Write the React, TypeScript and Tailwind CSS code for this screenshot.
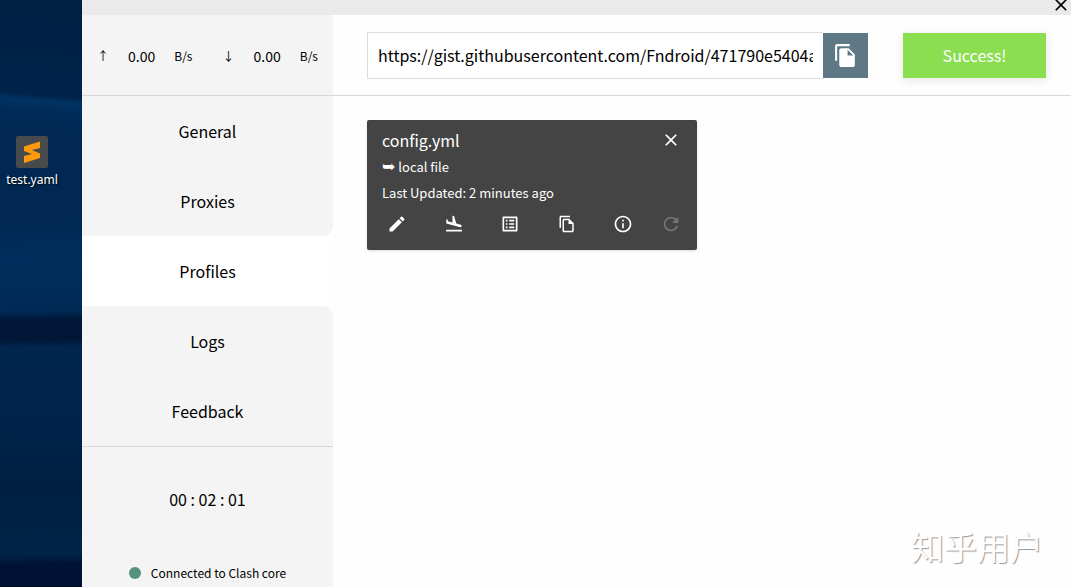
import { useState } from 'react';
import { MdClose, MdEdit, MdFlightLand, MdOutlineListAlt, MdOutlineFileCopy, MdFileCopy, MdInfoOutline, MdRefresh } from 'react-icons/md';

const pages = ['General', 'Proxies', 'Profiles', 'Logs', 'Feedback'];

const speeds = [
  { arrow: '↑', label: 'Upload', value: '0.00' },
  { arrow: '↓', label: 'Download', value: '0.00' },
];

const actions = [
  { label: 'Edit', Icon: MdEdit, size: 20 },
  { label: 'Edit externally', Icon: MdFlightLand, size: 20 },
  { label: 'Rules', Icon: MdOutlineListAlt, size: 20 },
  { label: 'Copy', Icon: MdOutlineFileCopy, size: 18 },
  { label: 'Info', Icon: MdInfoOutline, size: 20 },
];

const Desktop = () => (
  <div className="w-[82px] shrink-0 pt-[136px] bg-[linear-gradient(185deg,#001f42_0px,#00224b_98px,#003362_104px,#002c59_114px,#002853_135px,#00285300_150px),linear-gradient(179deg,#002853_0px,#002853_220px,#002f5d_260px,#002a56_312px,#001737_320px,#001737_340px,#00254e_348px,#00234b_430px,#001e40_490px,#002448_555px,#001233_565px)]">
    <button className="flex w-16 flex-col items-center">
      <svg viewBox="0 0 32 32" className="h-8 w-8" aria-hidden="true">
        <rect width="32" height="32" rx="2" fill="#494a4b" />
        <path d="M8 10.5 24 5.5V12L16 14 24 17.5V22L8 27V20L16 18 8 15Z" fill="#ff9a0c" />
      </svg>
      <span className="mt-0.5 font-['Noto_Sans','Liberation_Sans',sans-serif] text-xs leading-5 text-white [text-shadow:1px_1px_2px_#000]">test.yaml</span>
    </button>
  </div>
);

// the pages next to the open one get a rounded corner on the side that touches it
const corner = (index: number, active: number) => {
  if (index === active) return 'bg-white';
  if (index === active - 1) return 'bg-[#f4f4f4] rounded-br-[10px]';
  if (index === active + 1) return 'bg-[#f4f4f4] rounded-tr-[10px]';
  return 'bg-[#f4f4f4]';
};

const Sidebar = () => {
  const [active, setActive] = useState(2);

  return (
    <aside className="flex w-[251px] shrink-0 flex-col">
      <nav className="flex flex-col border-b border-[#d8d8d8]">
        {pages.map((page, index) => (
          <button key={page} onClick={() => setActive(index)} className={`h-[70px] text-base ${corner(index, active)}`}>
            {page}
          </button>
        ))}
      </nav>
      <div className="flex flex-1 flex-col items-center bg-[#f4f4f4] pt-10">
        <div className="text-base leading-6">00 : 02 : 01</div>
        <div className="mt-12 flex items-center gap-2.5 text-xs leading-7">
          <span className="h-3 w-3 rounded-full bg-[#54917f]"></span>
          Connected to Clash core
        </div>
      </div>
    </aside>
  );
};

const ProfileCard = () => (
  <article className="w-[330px] rounded-xs bg-[#444] px-[15px] pt-1.5 pb-[15px] text-white shadow-sm">
    <div className="flex items-center justify-between">
      <h2 className="text-base leading-7">config.yml</h2>
      <button aria-label="Delete" className="pr-px"><MdClose size={20} /></button>
    </div>
    <p className="text-[13px] leading-[26px]">
      <span className="font-['DejaVu_Sans',sans-serif] text-base leading-none">➥</span> local file
    </p>
    <p className="text-[13px] leading-[26px]">Last Updated: 2 minutes ago</p>
    <div className="mt-[7px] flex items-center justify-between">
      <div className="flex w-64 justify-between">
        {actions.map(({ label, Icon, size }) => (
          <button key={label} aria-label={label} className="flex w-[30px] items-center justify-center"><Icon size={size} /></button>
        ))}
      </div>
      <button aria-label="Refresh" disabled className="text-[#737373]"><MdRefresh size={22} /></button>
    </div>
  </article>
);

const App = () => {
  const [url, setUrl] = useState('https://gist.githubusercontent.com/Fndroid/471790e5404a');

  return (
    <div className="flex min-h-screen font-['Noto_Sans_CJK_SC',sans-serif] text-black">
      <Desktop />
      <div className="flex min-w-0 flex-1 flex-col bg-[#fefefe]">
        <div className="flex h-[15px] items-end justify-end overflow-hidden bg-[#eaeaea]">
          <button aria-label="Close"><MdClose size={20} /></button>
        </div>
        <header className="flex h-[81px] border-b border-[#d8d8d8]">
          <div className="flex w-[251px] shrink-0 bg-[#f4f4f4] pt-0.5">
            {speeds.map(speed => (
              <div key={speed.label} aria-label={speed.label} className="flex flex-1 items-center justify-between px-[15px]">
                <span className="text-xs">{speed.arrow}</span>
                <span className="text-sm">{speed.value}</span>
                <span className="text-xs">B/s</span>
              </div>
            ))}
          </div>
          <form className="flex flex-1 items-center pr-[25px] pl-[34px]" onSubmit={e => e.preventDefault()}>
            <input
              aria-label="Profile URL"
              value={url}
              onChange={e => setUrl(e.target.value)}
              className="h-[47px] min-w-0 flex-1 border border-r-0 border-[#dcdcdc] bg-white px-2.5 text-base outline-none"
            />
            <button type="button" aria-label="Paste" className="flex h-[45px] w-[45px] items-center justify-center bg-[#5f7886] text-white">
              <MdFileCopy size={25} />
            </button>
            <button className="ml-[35px] h-[45px] w-[143px] bg-[#8ade4f] text-base text-white shadow-[0_2px_10px_#0000001a]">Success!</button>
          </form>
        </header>
        <div className="flex flex-1">
          <Sidebar />
          <main className="flex-1 pt-6 pl-[34px]">
            <ProfileCard />
          </main>
        </div>
      </div>
      <div className="absolute right-7 bottom-4 text-[33px] text-white [text-shadow:1px_1px_1px_#999]">知乎用户</div>
    </div>
  );
};

export default App;
